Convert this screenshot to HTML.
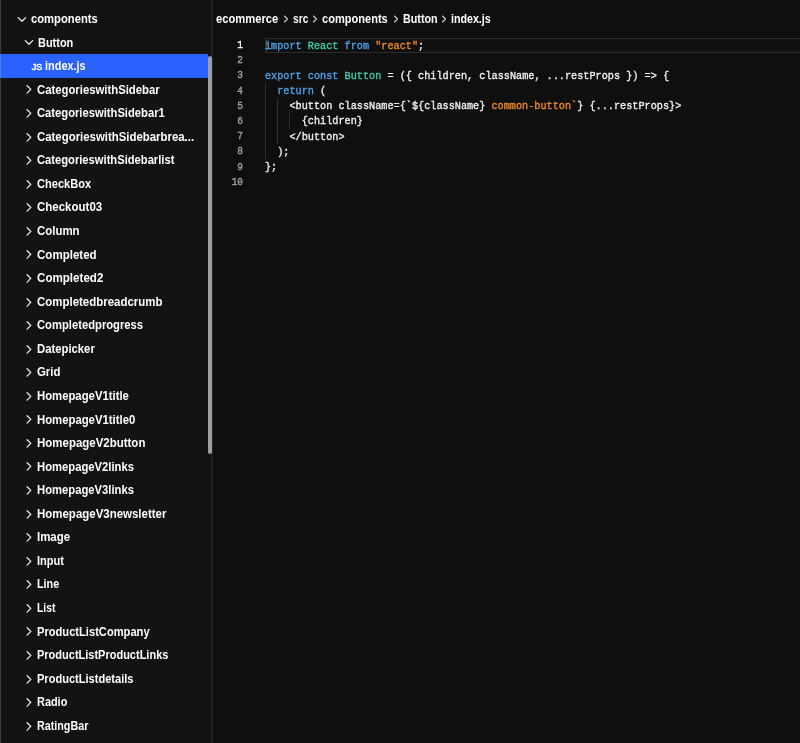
<!DOCTYPE html>
<html><head><meta charset="utf-8"><title>Editor</title>
<style>
html,body{margin:0;padding:0;background:#0f0f0f;}
body{width:800px;height:743px;overflow:hidden;position:relative;font-family:"Liberation Sans",sans-serif;}
#side,#main{will-change:transform;}
#side{position:absolute;left:0;top:0;width:211px;height:743px;background:#131313;box-sizing:border-box;overflow:hidden;}
#lb{position:absolute;left:0;top:0;width:1px;height:743px;background:rgba(255,255,255,0.17);}
#sep{position:absolute;left:211px;top:0;width:2px;height:743px;background:#212121;z-index:5;}
#thumb{position:absolute;left:208px;top:56px;width:3.8px;height:398px;background:#9e9e9e;border-radius:2px;z-index:6;}
#rows{position:absolute;left:0;top:7px;width:208px;}
.row{height:23.57px;display:flex;align-items:center;color:#fff;font-size:13px;font-weight:bold;white-space:nowrap;box-sizing:border-box;}
.row.sel{background:#2962ff;padding-left:32px;}

.lbl{position:relative;top:-0.3px;left:0.1px;display:inline-block;transform:scaleX(0.868);transform-origin:0 50%;}
.js{font-size:9.6px;font-weight:normal;letter-spacing:-0.3px;width:13.4px;display:inline-block;position:relative;top:0.6px;left:-0.4px;-webkit-text-stroke:0.4px #fff;}
.chev{flex:none;display:block;}
#main{position:absolute;left:212px;top:0;width:588px;height:743px;background:#0f0f0f;}
#crumb{position:absolute;left:0;top:0;color:#fff;font-size:13px;font-weight:bold;white-space:nowrap;}
.cw{position:absolute;top:11.1px;line-height:15px;display:inline-block;transform-origin:0 50%;}
.cc{position:absolute;display:block;}
#code{position:absolute;left:0;top:37.5px;width:588px;font-family:"Liberation Mono",monospace;font-size:11.5px;color:#f2f2f2;-webkit-text-stroke:0.35px;}
.ln{height:15.2px;line-height:15.2px;white-space:pre;position:relative;}
.no{position:absolute;width:34px;text-align:right;color:#a2a2a2;font-size:11.5px;line-height:15.2px;-webkit-text-stroke:0.4px;transform:scaleX(0.82);transform-origin:100% 50%;left:-3.1px;top:-0.4px;}
.no.cur{color:#fff;}
.src{position:absolute;left:53px;transform:scaleX(0.887);transform-origin:0 50%;}
.k{color:#4da3ea;} .t{color:#3fcfab;} .s{color:#f08a28;}
.g{position:absolute;width:1px;background:#333;}
#hl{position:absolute;left:52.8px;top:37.6px;width:540px;height:15.4px;border:1.6px solid #2d2d2d;border-left-width:1.2px;box-sizing:border-box;}
#cur{position:absolute;left:53.5px;top:39.5px;width:1.3px;height:11.5px;background:rgba(255,255,255,0.22);}
</style></head><body>
<div id="side"><div id="rows">
<div class="row" style="padding-left:16.4px"><svg class="chev" viewBox="0 0 12 10" width="12" height="10"><path d="M2.3 3.6 L6 7.3 L9.7 3.6" fill="none" stroke="#ececec" stroke-width="1.3" stroke-linecap="round" stroke-linejoin="round"/></svg><span class="lbl" style="margin-left:2.3px;transform:scaleX(0.8641)">components</span></div>
<div class="row" style="padding-left:23px"><svg class="chev" viewBox="0 0 12 10" width="12" height="10"><path d="M2.3 3.6 L6 7.3 L9.7 3.6" fill="none" stroke="#ececec" stroke-width="1.3" stroke-linecap="round" stroke-linejoin="round"/></svg><span class="lbl" style="margin-left:2.7px;transform:scaleX(0.8427)">Button</span></div>
<div class="row sel"><span class="js">JS</span><span class="lbl" style="transform:scaleX(0.8407)">index.js</span></div>
<div class="row" style="padding-left:24px"><svg class="chev" viewBox="0 0 10 12" width="10" height="12"><path d="M3.1 2.7 L6.8 6.4 L3.1 10.1" fill="none" stroke="#ececec" stroke-width="1.3" stroke-linecap="round" stroke-linejoin="round"/></svg><span class="lbl" style="margin-left:3px;transform:scaleX(0.8709)">CategorieswithSidebar</span></div>
<div class="row" style="padding-left:24px"><svg class="chev" viewBox="0 0 10 12" width="10" height="12"><path d="M3.1 2.7 L6.8 6.4 L3.1 10.1" fill="none" stroke="#ececec" stroke-width="1.3" stroke-linecap="round" stroke-linejoin="round"/></svg><span class="lbl" style="margin-left:3px;transform:scaleX(0.8626)">CategorieswithSidebar1</span></div>
<div class="row" style="padding-left:24px"><svg class="chev" viewBox="0 0 10 12" width="10" height="12"><path d="M3.1 2.7 L6.8 6.4 L3.1 10.1" fill="none" stroke="#ececec" stroke-width="1.3" stroke-linecap="round" stroke-linejoin="round"/></svg><span class="lbl" style="margin-left:3px;transform:scaleX(0.877)">CategorieswithSidebarbrea...</span></div>
<div class="row" style="padding-left:24px"><svg class="chev" viewBox="0 0 10 12" width="10" height="12"><path d="M3.1 2.7 L6.8 6.4 L3.1 10.1" fill="none" stroke="#ececec" stroke-width="1.3" stroke-linecap="round" stroke-linejoin="round"/></svg><span class="lbl" style="margin-left:3px;transform:scaleX(0.8605)">CategorieswithSidebarlist</span></div>
<div class="row" style="padding-left:24px"><svg class="chev" viewBox="0 0 10 12" width="10" height="12"><path d="M3.1 2.7 L6.8 6.4 L3.1 10.1" fill="none" stroke="#ececec" stroke-width="1.3" stroke-linecap="round" stroke-linejoin="round"/></svg><span class="lbl" style="margin-left:3px;transform:scaleX(0.8506)">CheckBox</span></div>
<div class="row" style="padding-left:24px"><svg class="chev" viewBox="0 0 10 12" width="10" height="12"><path d="M3.1 2.7 L6.8 6.4 L3.1 10.1" fill="none" stroke="#ececec" stroke-width="1.3" stroke-linecap="round" stroke-linejoin="round"/></svg><span class="lbl" style="margin-left:3px;transform:scaleX(0.8843)">Checkout03</span></div>
<div class="row" style="padding-left:24px"><svg class="chev" viewBox="0 0 10 12" width="10" height="12"><path d="M3.1 2.7 L6.8 6.4 L3.1 10.1" fill="none" stroke="#ececec" stroke-width="1.3" stroke-linecap="round" stroke-linejoin="round"/></svg><span class="lbl" style="margin-left:3px;transform:scaleX(0.8808)">Column</span></div>
<div class="row" style="padding-left:24px"><svg class="chev" viewBox="0 0 10 12" width="10" height="12"><path d="M3.1 2.7 L6.8 6.4 L3.1 10.1" fill="none" stroke="#ececec" stroke-width="1.3" stroke-linecap="round" stroke-linejoin="round"/></svg><span class="lbl" style="margin-left:3px;transform:scaleX(0.8875)">Completed</span></div>
<div class="row" style="padding-left:24px"><svg class="chev" viewBox="0 0 10 12" width="10" height="12"><path d="M3.1 2.7 L6.8 6.4 L3.1 10.1" fill="none" stroke="#ececec" stroke-width="1.3" stroke-linecap="round" stroke-linejoin="round"/></svg><span class="lbl" style="margin-left:3px;transform:scaleX(0.8925)">Completed2</span></div>
<div class="row" style="padding-left:24px"><svg class="chev" viewBox="0 0 10 12" width="10" height="12"><path d="M3.1 2.7 L6.8 6.4 L3.1 10.1" fill="none" stroke="#ececec" stroke-width="1.3" stroke-linecap="round" stroke-linejoin="round"/></svg><span class="lbl" style="margin-left:3px;transform:scaleX(0.8814)">Completedbreadcrumb</span></div>
<div class="row" style="padding-left:24px"><svg class="chev" viewBox="0 0 10 12" width="10" height="12"><path d="M3.1 2.7 L6.8 6.4 L3.1 10.1" fill="none" stroke="#ececec" stroke-width="1.3" stroke-linecap="round" stroke-linejoin="round"/></svg><span class="lbl" style="margin-left:3px;transform:scaleX(0.8639)">Completedprogress</span></div>
<div class="row" style="padding-left:24px"><svg class="chev" viewBox="0 0 10 12" width="10" height="12"><path d="M3.1 2.7 L6.8 6.4 L3.1 10.1" fill="none" stroke="#ececec" stroke-width="1.3" stroke-linecap="round" stroke-linejoin="round"/></svg><span class="lbl" style="margin-left:3px;transform:scaleX(0.8695)">Datepicker</span></div>
<div class="row" style="padding-left:24px"><svg class="chev" viewBox="0 0 10 12" width="10" height="12"><path d="M3.1 2.7 L6.8 6.4 L3.1 10.1" fill="none" stroke="#ececec" stroke-width="1.3" stroke-linecap="round" stroke-linejoin="round"/></svg><span class="lbl" style="margin-left:3px;transform:scaleX(0.8756)">Grid</span></div>
<div class="row" style="padding-left:24px"><svg class="chev" viewBox="0 0 10 12" width="10" height="12"><path d="M3.1 2.7 L6.8 6.4 L3.1 10.1" fill="none" stroke="#ececec" stroke-width="1.3" stroke-linecap="round" stroke-linejoin="round"/></svg><span class="lbl" style="margin-left:3px;transform:scaleX(0.8709)">HomepageV1title</span></div>
<div class="row" style="padding-left:24px"><svg class="chev" viewBox="0 0 10 12" width="10" height="12"><path d="M3.1 2.7 L6.8 6.4 L3.1 10.1" fill="none" stroke="#ececec" stroke-width="1.3" stroke-linecap="round" stroke-linejoin="round"/></svg><span class="lbl" style="margin-left:3px;transform:scaleX(0.8716)">HomepageV1title0</span></div>
<div class="row" style="padding-left:24px"><svg class="chev" viewBox="0 0 10 12" width="10" height="12"><path d="M3.1 2.7 L6.8 6.4 L3.1 10.1" fill="none" stroke="#ececec" stroke-width="1.3" stroke-linecap="round" stroke-linejoin="round"/></svg><span class="lbl" style="margin-left:3px;transform:scaleX(0.8828)">HomepageV2button</span></div>
<div class="row" style="padding-left:24px"><svg class="chev" viewBox="0 0 10 12" width="10" height="12"><path d="M3.1 2.7 L6.8 6.4 L3.1 10.1" fill="none" stroke="#ececec" stroke-width="1.3" stroke-linecap="round" stroke-linejoin="round"/></svg><span class="lbl" style="margin-left:3px;transform:scaleX(0.8662)">HomepageV2links</span></div>
<div class="row" style="padding-left:24px"><svg class="chev" viewBox="0 0 10 12" width="10" height="12"><path d="M3.1 2.7 L6.8 6.4 L3.1 10.1" fill="none" stroke="#ececec" stroke-width="1.3" stroke-linecap="round" stroke-linejoin="round"/></svg><span class="lbl" style="margin-left:3px;transform:scaleX(0.8662)">HomepageV3links</span></div>
<div class="row" style="padding-left:24px"><svg class="chev" viewBox="0 0 10 12" width="10" height="12"><path d="M3.1 2.7 L6.8 6.4 L3.1 10.1" fill="none" stroke="#ececec" stroke-width="1.3" stroke-linecap="round" stroke-linejoin="round"/></svg><span class="lbl" style="margin-left:3px;transform:scaleX(0.8824)">HomepageV3newsletter</span></div>
<div class="row" style="padding-left:24px"><svg class="chev" viewBox="0 0 10 12" width="10" height="12"><path d="M3.1 2.7 L6.8 6.4 L3.1 10.1" fill="none" stroke="#ececec" stroke-width="1.3" stroke-linecap="round" stroke-linejoin="round"/></svg><span class="lbl" style="margin-left:3px;transform:scaleX(0.8816)">Image</span></div>
<div class="row" style="padding-left:24px"><svg class="chev" viewBox="0 0 10 12" width="10" height="12"><path d="M3.1 2.7 L6.8 6.4 L3.1 10.1" fill="none" stroke="#ececec" stroke-width="1.3" stroke-linecap="round" stroke-linejoin="round"/></svg><span class="lbl" style="margin-left:3px;transform:scaleX(0.8493)">Input</span></div>
<div class="row" style="padding-left:24px"><svg class="chev" viewBox="0 0 10 12" width="10" height="12"><path d="M3.1 2.7 L6.8 6.4 L3.1 10.1" fill="none" stroke="#ececec" stroke-width="1.3" stroke-linecap="round" stroke-linejoin="round"/></svg><span class="lbl" style="margin-left:3px;transform:scaleX(0.8299)">Line</span></div>
<div class="row" style="padding-left:24px"><svg class="chev" viewBox="0 0 10 12" width="10" height="12"><path d="M3.1 2.7 L6.8 6.4 L3.1 10.1" fill="none" stroke="#ececec" stroke-width="1.3" stroke-linecap="round" stroke-linejoin="round"/></svg><span class="lbl" style="margin-left:3px;transform:scaleX(0.7979)">List</span></div>
<div class="row" style="padding-left:24px"><svg class="chev" viewBox="0 0 10 12" width="10" height="12"><path d="M3.1 2.7 L6.8 6.4 L3.1 10.1" fill="none" stroke="#ececec" stroke-width="1.3" stroke-linecap="round" stroke-linejoin="round"/></svg><span class="lbl" style="margin-left:3px;transform:scaleX(0.8566)">ProductListCompany</span></div>
<div class="row" style="padding-left:24px"><svg class="chev" viewBox="0 0 10 12" width="10" height="12"><path d="M3.1 2.7 L6.8 6.4 L3.1 10.1" fill="none" stroke="#ececec" stroke-width="1.3" stroke-linecap="round" stroke-linejoin="round"/></svg><span class="lbl" style="margin-left:3px;transform:scaleX(0.8459)">ProductListProductLinks</span></div>
<div class="row" style="padding-left:24px"><svg class="chev" viewBox="0 0 10 12" width="10" height="12"><path d="M3.1 2.7 L6.8 6.4 L3.1 10.1" fill="none" stroke="#ececec" stroke-width="1.3" stroke-linecap="round" stroke-linejoin="round"/></svg><span class="lbl" style="margin-left:3px;transform:scaleX(0.8502)">ProductListdetails</span></div>
<div class="row" style="padding-left:24px"><svg class="chev" viewBox="0 0 10 12" width="10" height="12"><path d="M3.1 2.7 L6.8 6.4 L3.1 10.1" fill="none" stroke="#ececec" stroke-width="1.3" stroke-linecap="round" stroke-linejoin="round"/></svg><span class="lbl" style="margin-left:3px;transform:scaleX(0.8398)">Radio</span></div>
<div class="row" style="padding-left:24px"><svg class="chev" viewBox="0 0 10 12" width="10" height="12"><path d="M3.1 2.7 L6.8 6.4 L3.1 10.1" fill="none" stroke="#ececec" stroke-width="1.3" stroke-linecap="round" stroke-linejoin="round"/></svg><span class="lbl" style="margin-left:3px;transform:scaleX(0.8261)">RatingBar</span></div>
</div><div id="lb"></div></div>
<div id="sep"></div><div id="thumb"></div>
<div id="main">
<div id="crumb"><span class="cw" style="left:3.75px;transform:scaleX(0.8612)">ecommerce</span><span class="cw" style="left:80.60px;transform:scaleX(0.7885)">src</span><span class="cw" style="left:110.25px;transform:scaleX(0.8506)">components</span><span class="cw" style="left:190.60px;transform:scaleX(0.8286)">Button</span><span class="cw" style="left:239.40px;transform:scaleX(0.8199)">index.js</span><svg class="cc" style="left:70.30px;top:13.30px" width="8" height="12" viewBox="-4 -6 8 12"><path d="M-1.5 -3 L1.5 0 L-1.5 3" fill="none" stroke="#cfcfcf" stroke-width="1.1" stroke-linecap="round" stroke-linejoin="round"/></svg><svg class="cc" style="left:99.10px;top:13.30px" width="8" height="12" viewBox="-4 -6 8 12"><path d="M-1.5 -3 L1.5 0 L-1.5 3" fill="none" stroke="#cfcfcf" stroke-width="1.1" stroke-linecap="round" stroke-linejoin="round"/></svg><svg class="cc" style="left:179.60px;top:13.30px" width="8" height="12" viewBox="-4 -6 8 12"><path d="M-1.5 -3 L1.5 0 L-1.5 3" fill="none" stroke="#cfcfcf" stroke-width="1.1" stroke-linecap="round" stroke-linejoin="round"/></svg><svg class="cc" style="left:228.40px;top:13.30px" width="8" height="12" viewBox="-4 -6 8 12"><path d="M-1.5 -3 L1.5 0 L-1.5 3" fill="none" stroke="#cfcfcf" stroke-width="1.1" stroke-linecap="round" stroke-linejoin="round"/></svg></div>
<div id="hl"></div><div id="cur"></div>
<div class="g" style="left:53px;top:83px;height:76px"></div><div class="g" style="left:65.2px;top:98.2px;height:45.6px"></div><div class="g" style="left:77.4px;top:113.4px;height:15.2px"></div>
<div id="code">
<div class="ln"><span class="no cur">1</span><span class="src"><span class="k">import</span> <span class="t">React</span> <span class="k">from</span> <span class="s">"react"</span>;</span></div>
<div class="ln"><span class="no">2</span><span class="src"></span></div>
<div class="ln"><span class="no">3</span><span class="src"><span class="k">export</span> <span class="k">const</span> <span class="t">Button</span> = ({ children, className, ...restProps }) =&gt; {</span></div>
<div class="ln"><span class="no">4</span><span class="src">  <span class="k">return</span> (</span></div>
<div class="ln"><span class="no">5</span><span class="src">    &lt;button className={`${className} <span class="s">common-button`</span>} {...restProps}&gt;</span></div>
<div class="ln"><span class="no">6</span><span class="src">      {children}</span></div>
<div class="ln"><span class="no">7</span><span class="src">    &lt;/button&gt;</span></div>
<div class="ln"><span class="no">8</span><span class="src">  );</span></div>
<div class="ln"><span class="no">9</span><span class="src">};</span></div>
<div class="ln"><span class="no">10</span><span class="src"></span></div>
</div>
</div>
</body></html>
